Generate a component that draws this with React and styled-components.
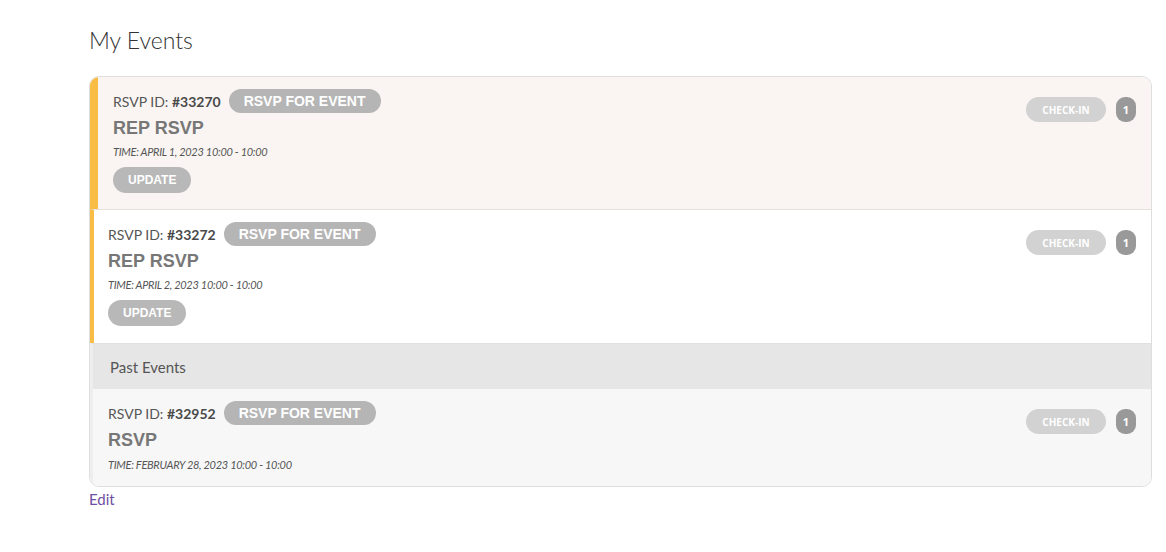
import React from "react";
import styled, { createGlobalStyle } from "styled-components";

const Global = createGlobalStyle`
  body { margin: 0; background: #fff; font-family: Lato, "Open Sans", sans-serif; color: #555; }
`;

const Page = styled.div`
  padding: 24px 14px 30px 89px;
`;

const Heading = styled.h1`
  margin: 0 0 20px;
  font-family: Lato, sans-serif;
  font-weight: 300;
  font-size: 23px;
  line-height: 32px;
  color: #333;
`;

const List = styled.div`
  border: 1px solid #dedede;
  border-radius: 10px;
  overflow: hidden;
`;

const Row = styled.div`
  display: flex;
  justify-content: space-between;
  align-items: flex-start;
  background: ${(p) => p.$bg};
  border-left: ${(p) => p.$bar}px solid ${(p) => p.$barColor};
  border-top: ${(p) => (p.$first ? "none" : "1px solid #e6e1de")};
  padding: 12px 15px ${(p) => p.$pb}px ${(p) => p.$pl}px;
`;

const Info = styled.div`
  display: flex;
  flex-direction: column;
  align-items: flex-start;
`;

const IdLine = styled.div`
  display: flex;
  align-items: center;
  gap: 8px;
  font-size: 14px;
  color: #555;
  height: 24px;
`;

const Strong = styled.b`
  font-weight: 700;
  color: #4a4a4a;
`;

const Pill = styled.span`
  display: inline-flex;
  align-items: center;
  height: 24px;
  padding: 0 15px;
  border-radius: 12px;
  background: #b5b5b5;
  color: #fff;
  font-family: "Liberation Sans", Arial, sans-serif;
  font-weight: 700;
  font-size: 14px;
`;

const Title = styled.div`
  font-family: "Liberation Sans", Arial, sans-serif;
  font-weight: 700;
  font-size: 18px;
  color: #777;
  margin-top: 4px;
  line-height: 22px;
`;

const Time = styled.div`
  font-style: italic;
  font-size: 11px;
  letter-spacing: -0.3px;
  color: #555;
  text-transform: uppercase;
  margin-top: ${(p) => p.$mt}px;
  line-height: 14px;
`;

const UpdateBtn = styled.button`
  margin-top: 8px;
  height: 26px;
  padding: 0 15px;
  border: none;
  border-radius: 13px;
  background: #b8b8b8;
  color: #fff;
  font-family: "Liberation Sans", Arial, sans-serif;
  font-weight: 700;
  font-size: 12px;
`;

const Actions = styled.div`
  display: flex;
  align-items: center;
  gap: 10px;
  margin-top: 8px;
`;

const CheckIn = styled.span`
  display: inline-flex;
  align-items: center;
  justify-content: center;
  width: 80px;
  height: 25px;
  border-radius: 13px;
  background: #d2d2d2;
  color: #fff;
  font-family: "Open Sans", sans-serif;
  font-weight: 700;
  font-size: 10px;
`;

const Count = styled.span`
  display: inline-flex;
  align-items: center;
  justify-content: center;
  width: 20px;
  height: 25px;
  border-radius: 9px;
  background: #999;
  color: #fff;
  font-family: "Open Sans", sans-serif;
  font-weight: 700;
  font-size: 11px;
`;

const SectionHeader = styled.div`
  background: #e6e6e6;
  border-left: 3px solid #eeeeee;
  border-top: 1px solid #e0e0e0;
  padding: 0 17px;
  height: 45px;
  display: flex;
  align-items: center;
  font-size: 15px;
  color: #555;
`;

const EditLink = styled.a`
  display: inline-block;
  margin-top: 3px;
  font-size: 15px;
  color: #6f4fa0;
  text-decoration: none;
`;

const upcoming = [
  { id: "33270", title: "REP RSVP", time: "Time: April 1, 2023 10:00 - 10:00", bg: "#faf5f2", bar: 8, pl: 15, pb: 16, first: true },
  { id: "33272", title: "REP RSVP", time: "Time: April 2, 2023 10:00 - 10:00", bg: "#ffffff", bar: 4, pl: 14, pb: 17 },
];

const past = [
  { id: "32952", title: "RSVP", time: "Time: February 28, 2023 10:00 - 10:00" },
];

function EventRow({ e, bg, bar, barColor, pl, pb, first, update }) {
  return (
    <Row $bg={bg} $bar={bar} $barColor={barColor} $pl={pl} $pb={pb} $first={first}>
      <Info>
        <IdLine>
          <span>
            RSVP ID: <Strong>#{e.id}</Strong>
          </span>
          <Pill>RSVP FOR EVENT</Pill>
        </IdLine>
        <Title>{e.title}</Title>
        <Time $mt={update ? 6 : 7}>{e.time}</Time>
        {update && <UpdateBtn>UPDATE</UpdateBtn>}
      </Info>
      <Actions>
        <CheckIn>CHECK-IN</CheckIn>
        <Count>1</Count>
      </Actions>
    </Row>
  );
}

export default function App() {
  return (
    <Page>
      <Global />
      <Heading>My Events</Heading>
      <List>
        {upcoming.map((e) => (
          <EventRow
            key={e.id}
            e={e}
            bg={e.bg}
            bar={e.bar}
            barColor="#f9bc45"
            pl={e.pl}
            pb={e.pb}
            first={e.first}
            update
          />
        ))}
        <SectionHeader>Past Events</SectionHeader>
        {past.map((e) => (
          <EventRow key={e.id} e={e} bg="#f7f7f7" bar={3} barColor="#eeeeee" pl={15} pb={14} first />
        ))}
      </List>
      <EditLink href="#">Edit</EditLink>
    </Page>
  );
}
